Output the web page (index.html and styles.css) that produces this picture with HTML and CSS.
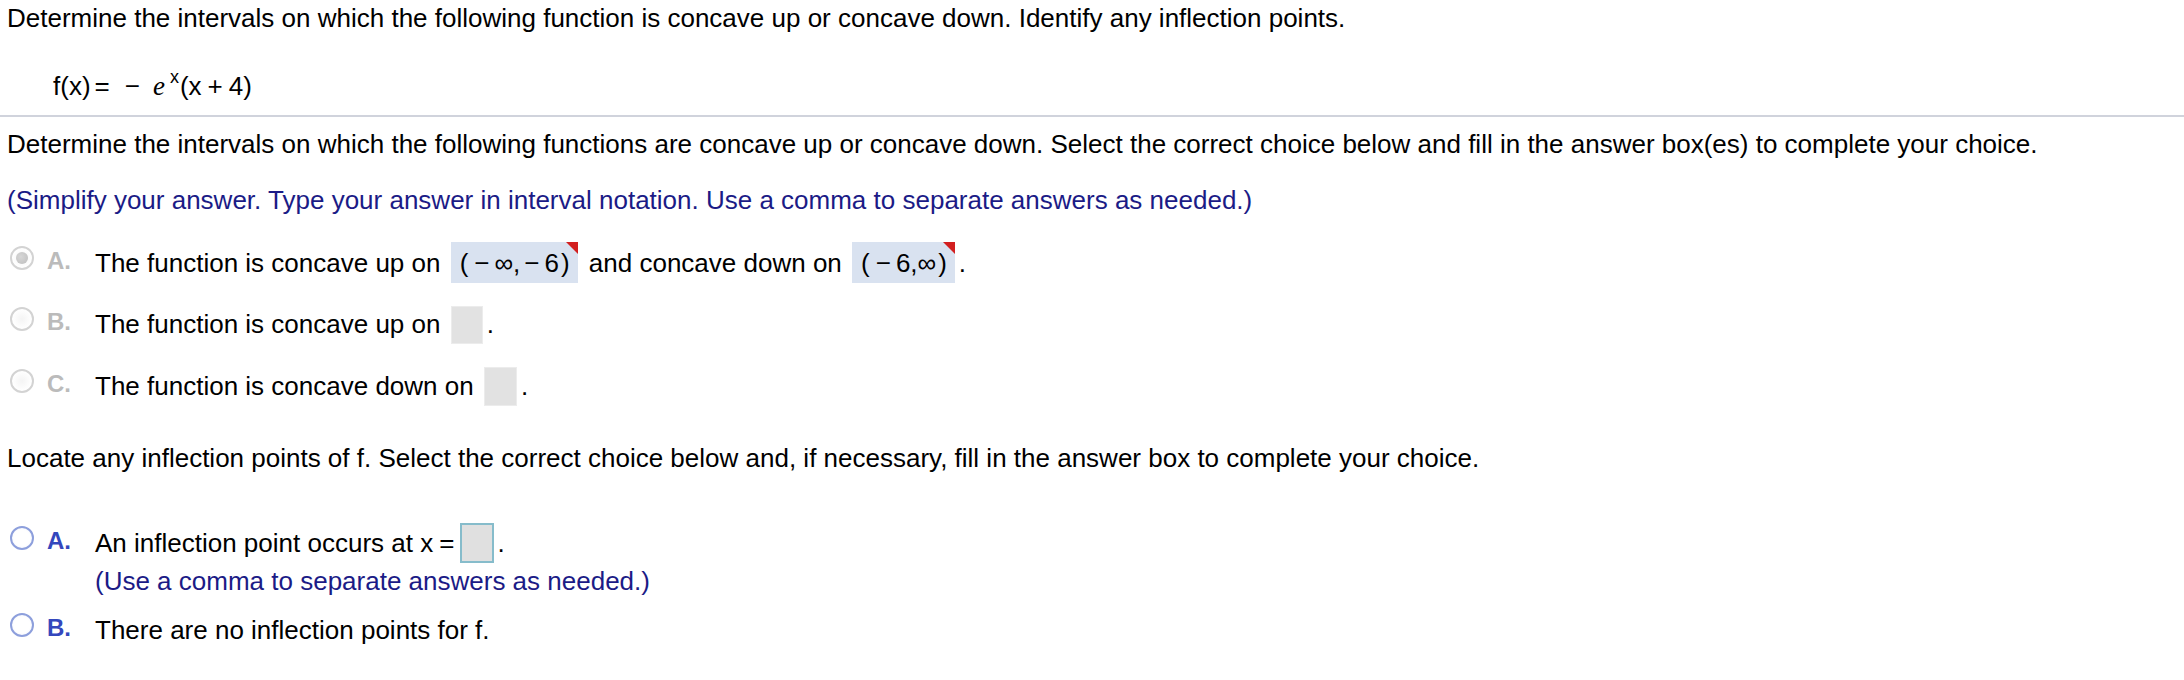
FILE: index.html
```html
<!DOCTYPE html>
<html lang="en">
<head>
    <meta charset="UTF-8">
    <title>Concavity and Inflection Points</title>
    <link rel="stylesheet" href="styles.css">
</head>
<body>

    <div class="page">
        <!-- Question statement -->
        <p class="prompt">Determine the intervals on which the following function is concave up or concave down. Identify any inflection points.</p>
        <div class="formula">
            <span>f(x)</span><span class="op">=</span><span class="op minus">&minus;</span><i class="e">e</i><sup>x</sup><span>(x</span><span class="op plus">+</span><span>4)</span>
        </div>

        <hr class="divider">

        <!-- Part 1: intervals -->
        <p class="prompt part-one">Determine the intervals on which the following functions are concave up or concave down. Select the correct choice below and fill in the answer box(es) to complete your choice.</p>
        <p class="note simplify">(Simplify your answer. Type your answer in interval notation. Use a comma to separate answers as needed.)</p>

        <ul class="choices locked">
            <li class="choice">
                <span class="mark"><span class="radio checked"></span><span class="letter">A.</span></span>
                <div class="choice-body">The function is concave up on <span class="answer filled"><span class="mo">(</span><span class="mo minus">&minus;</span>&infin;,<span class="mo minus">&minus;</span>6<span class="mo">)</span><span class="flag"></span></span> and concave down on <span class="answer filled"><span class="mo">(</span><span class="mo minus">&minus;</span>6,&infin;<span class="mo">)</span><span class="flag"></span></span>.</div>
            </li>
            <li class="choice">
                <span class="mark"><span class="radio"></span><span class="letter">B.</span></span>
                <div class="choice-body">The function is concave up on <span class="answer empty"></span>.</div>
            </li>
            <li class="choice">
                <span class="mark"><span class="radio"></span><span class="letter">C.</span></span>
                <div class="choice-body">The function is concave down on <span class="answer empty tall"></span>.</div>
            </li>
        </ul>

        <!-- Part 2: inflection points -->
        <p class="prompt part-two">Locate any inflection points of f. Select the correct choice below and, if necessary, fill in the answer box to complete your choice.</p>

        <ul class="choices open">
            <li class="choice">
                <span class="mark"><span class="radio"></span><span class="letter">A.</span></span>
                <div class="choice-body">
                    <div>An inflection point occurs at x<span class="eq">=</span><span class="answer input"></span>.</div>
                    <div class="note">(Use a comma to separate answers as needed.)</div>
                </div>
            </li>
            <li class="choice last">
                <span class="mark"><span class="radio"></span><span class="letter">B.</span></span>
                <div class="choice-body">There are no inflection points for f.</div>
            </li>
        </ul>
    </div>

</body>
</html>
```

FILE: styles.css
```css
body {
    margin: 0;
    background-color: #ffffff;
    color: #000000;
    font-family: "Liberation Sans", Arial, Helvetica, sans-serif;
    font-size: 26px;
    line-height: 30px;
}

.page {
    padding: 3px 0 0 7px;
}

p {
    margin: 0;
}

/* Formula line */
.formula {
    margin-top: 38px;
    padding-left: 46px;
    white-space: nowrap;
}

.formula .op {
    margin: 0 5px 0 4px;
}

.formula .minus {
    margin: 0 13px 0 10px;
}

.formula .plus {
    margin: 0 6px;
}

.formula .e {
    font-family: "Liberation Serif", "Times New Roman", serif;
    font-size: 27px;
}

.formula sup {
    font-size: 18px;
    line-height: 0;
    vertical-align: 12px;
    margin: 0 1px 0 5px;
}

.divider {
    margin: 14px 0 0 -7px;
    border: none;
    height: 2px;
    background-color: #d0d3dc;
}

.part-one {
    margin-top: 12px;
}

.note {
    color: #1b1b86;
}

.simplify {
    margin-top: 26px;
}

/* Choice lists */
.choices {
    list-style: none;
    margin: 27px 0 0 0;
    padding: 0;
}

.choice {
    display: flex;
    align-items: baseline;
    margin-bottom: 23px;
}

.choice.last {
    margin-bottom: 0;
}

.mark {
    flex: none;
    width: 88px;
    white-space: nowrap;
}

.radio {
    display: inline-block;
    box-sizing: border-box;
    width: 24px;
    height: 24px;
    margin-left: 3px;
    border-radius: 50%;
    vertical-align: 2px;
    position: relative;
}

.letter {
    display: inline-block;
    margin-left: 13px;
    font-size: 24px;
    font-weight: bold;
    vertical-align: 3px;
}

.locked .radio {
    border: 2px solid #d3d3d3;
    background: radial-gradient(circle, #f4f4f4 0%, #ffffff 70%);
}

.locked .radio.checked::after {
    content: "";
    position: absolute;
    left: 4px;
    top: 4px;
    width: 12px;
    height: 12px;
    border-radius: 50%;
    background: radial-gradient(circle at 40% 40%, #d6d6d6 0%, #bdbdbd 100%);
}

.locked .letter {
    color: #bbbbbb;
}

.open .radio {
    border: 2px solid #8d9fdc;
    background: radial-gradient(circle, #ffffff 55%, #eef1fb 100%);
}

.open .letter {
    color: #3447bd;
}

/* Answer boxes */
.answer {
    display: inline-block;
    box-sizing: border-box;
    position: relative;
    margin: 0 4px 0 3px;
}

.answer.filled {
    height: 41px;
    padding: 6px 6px 0 7px;
    background-color: #d9e2f0;
    line-height: 30px;
}

.answer.filled .mo {
    margin: 0 2px;
}

.answer.filled .mo.minus {
    margin: 0 5px 0 4px;
}

.flag {
    position: absolute;
    top: 0;
    right: 0;
    width: 0;
    height: 0;
    border-top: 12px solid #d21f1f;
    border-left: 12px solid transparent;
}

.answer.empty {
    width: 32px;
    height: 38px;
    background-color: #e2e2e2;
    border: 1px solid #ececec;
    vertical-align: -11px;
    margin-left: 3px;
}

.answer.empty.tall {
    width: 33px;
    height: 39px;
}

.answer.input {
    width: 34px;
    height: 40px;
    background-color: #e0e0e0;
    border: 2px solid #86bccb;
    vertical-align: -11px;
    margin: 0 3px 0 6px;
}

.eq {
    margin-left: 6px;
}

.part-two {
    margin-top: 37px;
}

.part-two + .choices {
    margin-top: 50px;
}

.choice-body .note {
    margin-top: 3px;
}

.open .choice {
    margin-bottom: 17px;
}
```
